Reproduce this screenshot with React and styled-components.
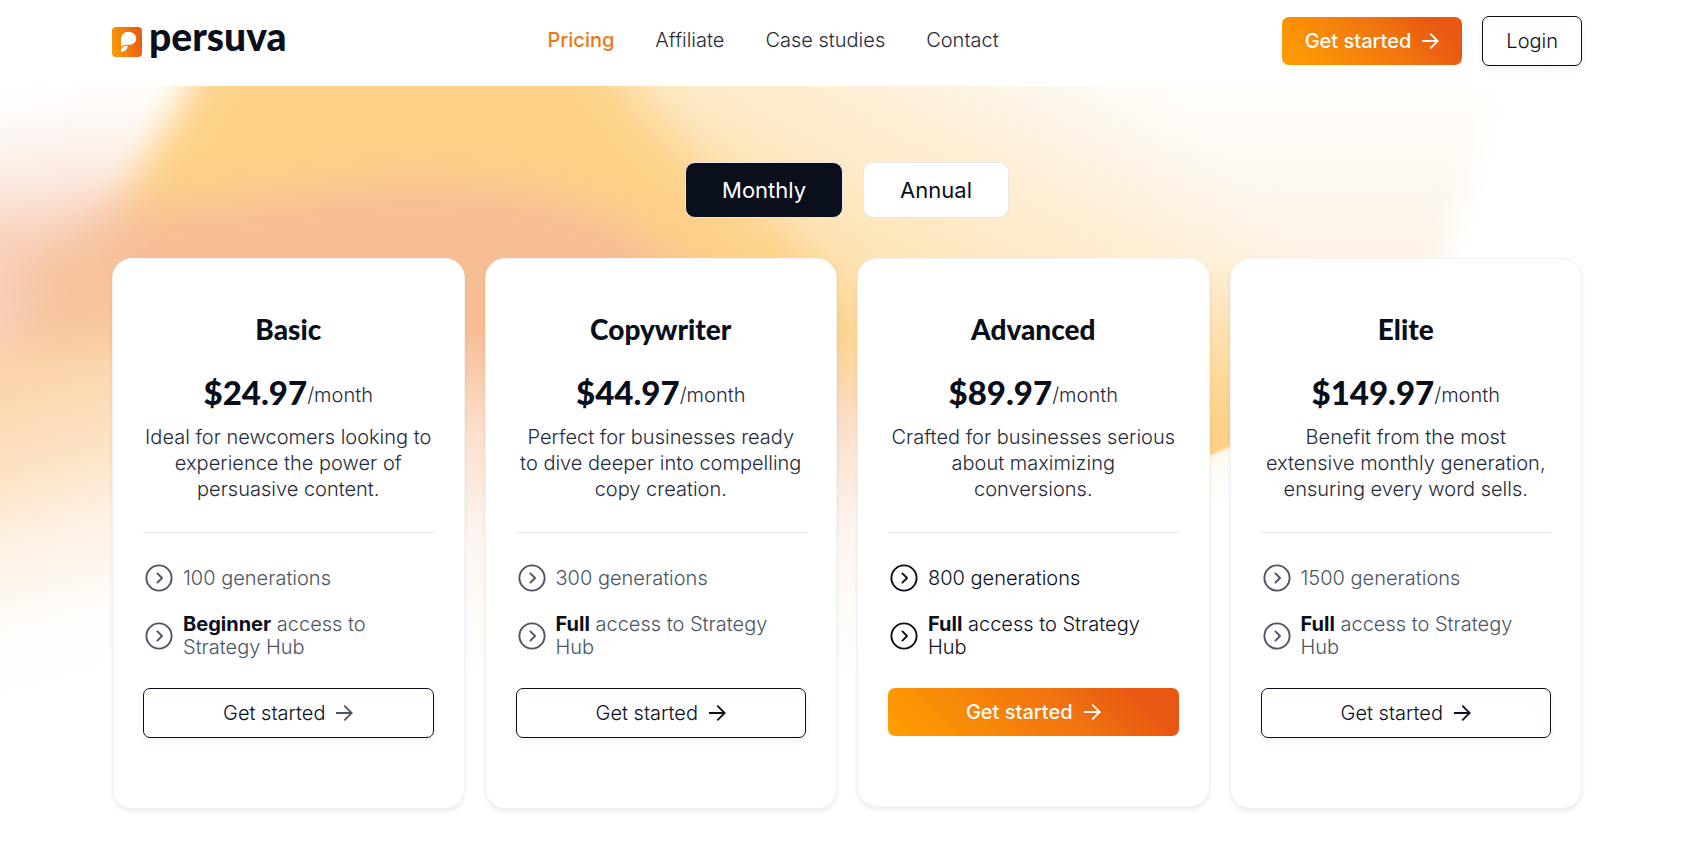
import React, { useState } from "react";
import styled, { createGlobalStyle } from "styled-components";

const plans = [
  {
    name: "Basic",
    price: "$24.97",
    text: "Ideal for newcomers looking to\nexperience the power of\npersuasive content.",
    generations: "100 generations",
    access: "Beginner",
    softArrow: true,
  },
  {
    name: "Copywriter",
    price: "$44.97",
    text: "Perfect for businesses ready\nto dive deeper into compelling\ncopy creation.",
    generations: "300 generations",
    access: "Full",
  },
  {
    name: "Advanced",
    price: "$89.97",
    text: "Crafted for businesses serious\nabout maximizing\nconversions.",
    generations: "800 generations",
    access: "Full",
    featured: true,
  },
  {
    name: "Elite",
    price: "$149.97",
    text: "Benefit from the most\nextensive monthly generation,\nensuring every word sells.",
    generations: "1500 generations",
    access: "Full",
  },
];

const Arrow = () => (
  <svg width="18" height="18" viewBox="0 0 18 18" fill="none" aria-hidden="true">
    <path
      d="M1 9h15.5M9.3 1.6 16.7 9l-7.4 7.4"
      stroke="currentColor"
      strokeWidth="1.8"
    />
  </svg>
);

const CircleChevron = () => (
  <svg width="32" height="32" viewBox="0 0 32 32" fill="none" aria-hidden="true">
    <circle cx="16" cy="16" r="12.6" stroke="currentColor" strokeWidth="1.9" />
    <path
      d="m14.4 11.4 4.6 4.6-4.6 4.6"
      stroke="currentColor"
      strokeWidth="1.9"
      strokeLinecap="round"
      strokeLinejoin="round"
    />
  </svg>
);

const LogoMark = () => (
  <svg width="30" height="30" viewBox="0 0 30 30" aria-hidden="true">
    <defs>
      <linearGradient id="mark" x1="0" y1="0.6" x2="1" y2="0.4">
        <stop offset="0" stopColor="#fb9a06" />
        <stop offset="1" stopColor="#e95a12" />
      </linearGradient>
    </defs>
    <rect width="30" height="30" rx="4" fill="url(#mark)" />
    <path
      d="M9 20V12.500C9 8 12 4.800 16.300 4.800c4.400 0 7.900 3 7.900 6.700 0 4-3.400 6.300-7.500 6.300-3.200 0-5.700.3-7.700 2.200z"
      fill="#fff"
    />
    <path d="M9 24.800c-.4-3.500 1.700-6 6.800-6.100-.3 3.400-2.500 5.900-6.800 6.100z" fill="#fff" />
  </svg>
);

const Backdrop = () => (
  <BackdropSvg viewBox="0 86 1702 760" preserveAspectRatio="none" aria-hidden="true">
    <defs>
      <filter id="soft" x="-20%" y="-20%" width="140%" height="140%">
        <feGaussianBlur stdDeviation="22" />
      </filter>
      <filter id="medium" x="-20%" y="-20%" width="140%" height="140%">
        <feGaussianBlur stdDeviation="14" />
      </filter>
      <filter id="edge" x="-20%" y="-20%" width="140%" height="140%">
        <feGaussianBlur stdDeviation="1" />
      </filter>
      <linearGradient
        id="cream"
        gradientUnits="userSpaceOnUse"
        x1="800"
        y1="300"
        x2="960"
        y2="0"
      >
        <stop offset="0" stopColor="#fee0aa" />
        <stop offset="0.3" stopColor="#fde6bb" />
        <stop offset="0.45" stopColor="#feebcc" />
        <stop offset="0.65" stopColor="#feefd6" />
        <stop offset="0.85" stopColor="#fdf5ea" />
        <stop offset="1" stopColor="#fffdf8" />
      </linearGradient>
      <linearGradient id="rim" x1="0" y1="0" x2="0" y2="1">
        <stop offset="0" stopColor="#fffefb" />
        <stop offset="0.35" stopColor="#fdf7ee" />
        <stop offset="0.75" stopColor="#feeedb" />
        <stop offset="1" stopColor="#feecd2" />
      </linearGradient>
      <linearGradient id="corner" gradientUnits="userSpaceOnUse" x1="0" y1="100" x2="20" y2="250">
        <stop offset="0" stopColor="#fff" />
        <stop offset="0.4" stopColor="#fdf1ea" />
        <stop offset="0.7" stopColor="#fae2d5" />
        <stop offset="1" stopColor="#f8cfb9" stopOpacity="0" />
      </linearGradient>
      <linearGradient id="wedge" x1="0" y1="0" x2="0" y2="1">
        <stop offset="0" stopColor="#fdd188" stopOpacity="0" />
        <stop offset="0.85" stopColor="#fdd085" />
      </linearGradient>
      <linearGradient id="fade" x1="0" y1="0" x2="0" y2="1">
        <stop offset="0" stopColor="#fff" stopOpacity="0" />
        <stop offset="0.28" stopColor="#fff" stopOpacity="0.5" />
        <stop offset="0.6" stopColor="#fff" stopOpacity="0.86" />
        <stop offset="1" stopColor="#fff" />
      </linearGradient>
      <linearGradient id="sideFade" x1="0" y1="0" x2="0.1" y2="1">
        <stop offset="0" stopColor="#fff" stopOpacity="0" />
        <stop offset="0.3" stopColor="#fff" stopOpacity="0.3" />
        <stop offset="0.55" stopColor="#fff" stopOpacity="0.7" />
        <stop offset="0.8" stopColor="#fff" stopOpacity="0.94" />
        <stop offset="1" stopColor="#fff" />
      </linearGradient>
    </defs>
    <path d="M900 86H1500L1440 270 1300 420H900Z" fill="url(#rim)" filter="url(#medium)" />
    <g filter="url(#soft)">
      <path d="M540 20H1180C1180 150 1200 230 1330 290L1230 450 1000 620 700 700Z" fill="url(#cream)" />
      <path d="M210 20H590C620 90 690 160 760 210 830 260 880 330 900 420L700 600 40 500-80 340-80 270C60 250 150 160 210 20Z" fill="#fdd188" />
      <path d="M-80 160C40 160 100 160 130 190L60 420-80 420Z" fill="#f8cfb9" />
      <path d="M60 250C80 200 190 205 290 192 400 170 540 175 630 225 720 290 800 350 870 400L880 760H20Z" fill="#f7be96" />
      <path d="M30 250 130 220V380H20Z" fill="#f7c39b" />
      <path d="M-80 360 150 330V760H-80Z" fill="#fbd3a6" />
    </g>
    <path d="M-100 20H200C170 110 120 200 20 260H-100Z" fill="url(#corner)" filter="url(#soft)" />
    <path d="M1190 260H1250V438L1190 464Z" fill="url(#wedge)" filter="url(#edge)" />
    <path d="M1190 464 1250 438V560H1190Z" fill="#fff" opacity="0.6" filter="url(#edge)" />
    <rect x="120" y="330" width="1070" height="350" fill="url(#fade)" />
    <rect y="360" width="120" height="340" fill="url(#sideFade)" />
    <rect x="1190" y="500" width="512" height="346" fill="#fff" />
    <rect y="679" x="120" width="1582" height="170" fill="#fff" />
    <rect y="699" width="120" height="150" fill="#fff" />
  </BackdropSvg>
);

const App = () => {
  const [billing, setBilling] = useState("Monthly");

  return (
    <>
      <GlobalStyle />
      <Header>
        <Logo href="#">
          <LogoMark />
          <span>persuva</span>
        </Logo>
        <Nav>
          <NavLink href="#pricing" $active>
            Pricing
          </NavLink>
          <NavLink href="#affiliate">Affiliate</NavLink>
          <NavLink href="#case-studies">Case studies</NavLink>
          <NavLink href="#contact">Contact</NavLink>
        </Nav>
        <Actions>
          <Button type="button" $primary>
            Get started <Arrow />
          </Button>
          <Button type="button">Login</Button>
        </Actions>
      </Header>

      <Main id="pricing">
        <Backdrop />
        <Billing>
          {["Monthly", "Annual"].map((period) => (
            <BillingButton
              key={period}
              type="button"
              aria-pressed={billing === period}
              $active={billing === period}
              onClick={() => setBilling(period)}
            >
              {period}
            </BillingButton>
          ))}
        </Billing>

        <Plans>
          {plans.map((plan) => (
            <Card key={plan.name}>
              <h2>{plan.name}</h2>
              <Price>
                <strong>{plan.price}</strong>
                <span>/month</span>
              </Price>
              <Description>{plan.text}</Description>
              <Features $dark={plan.featured}>
                <li>
                  <CircleChevron />
                  <span>{plan.generations}</span>
                </li>
                <li>
                  <CircleChevron />
                  <span>
                    <b>{plan.access}</b> access to Strategy Hub
                  </span>
                </li>
              </Features>
              <Button type="button" $primary={plan.featured} $softArrow={plan.softArrow}>
                Get started <Arrow />
              </Button>
            </Card>
          ))}
        </Plans>
      </Main>
    </>
  );
};

export default App;

const GlobalStyle = createGlobalStyle`
  * {
    box-sizing: border-box;
  }

  body {
    margin: 0;
    background: #fff;
    color: #0a0f1c;
    font-family: Inter, sans-serif;
    font-optical-sizing: none;
    font-size: 20px;
    font-weight: 300;
  }

  svg {
    flex-shrink: 0;
  }
`;

const Header = styled.header`
  display: flex;
  justify-content: space-between;
  align-items: center;
  min-height: 86px;
  padding: 0 120px 4px 112px;
  background: #fff;

  @media all and (max-width: 1300px) {
    flex-wrap: wrap;
    gap: 16px;
    padding: 16px;
  }
`;

const Logo = styled.a`
  display: flex;
  align-items: flex-end;
  gap: 7px;
  padding-bottom: 4px;
  color: #0a0f1c;
  font-family: Lato, sans-serif;
  font-size: 39px;
  font-weight: 900;
  line-height: 30px;
  text-decoration: none;

  span {
    padding-bottom: 6px;
  }
`;

const Nav = styled.nav`
  display: flex;
  gap: 41px;
  padding: 0 22px 2px 0;
`;

const NavLink = styled.a`
  color: ${(props) => (props.$active ? "#ee7612" : "#262b3a")};
  font-weight: ${(props) => (props.$active ? 500 : 300)};
  line-height: 24px;
  text-decoration: none;
`;

const Actions = styled.div`
  display: flex;
  align-items: center;
  gap: 20px;
`;

const Button = styled.button`
  display: flex;
  justify-content: center;
  align-items: center;
  gap: 10px;
  height: ${(props) => (props.$primary ? "48px" : "50px")};
  padding: 0 23px;
  border: ${(props) => (props.$primary ? "none" : "1px solid #0a0f1c")};
  border-radius: 7px;
  background: ${(props) =>
    props.$primary
      ? "linear-gradient(45deg, #ffa000 0%, #f07310 60%, #e95812 85%)"
      : "#fff"};
  box-shadow: ${(props) =>
    props.$primary ? "none" : "0 4px 6px rgba(10, 15, 28, 0.05)"};
  color: ${(props) => (props.$primary ? "#fff" : "#0a0f1c")};
  font-family: inherit;
  font-size: 20px;
  font-weight: ${(props) => (props.$primary ? 500 : 300)};
  cursor: pointer;

  svg {
    color: ${(props) => (props.$softArrow ? "#4b5563" : "inherit")};
  }
`;

const Main = styled.main`
  position: relative;
  padding: 76px 120px 38px 112px;

  @media all and (max-width: 1300px) {
    padding: 40px 16px;
  }
`;

const BackdropSvg = styled.svg`
  position: absolute;
  inset: 0;
  z-index: -1;
  width: 100%;
  height: 100%;
`;

const Billing = styled.div`
  display: flex;
  justify-content: center;
  gap: 20px;
  margin-bottom: 40px;
`;

const BillingButton = styled.button`
  height: 56px;
  padding: 0 36px;
  border: 1px solid #e5e7eb;
  border-radius: 10px;
  background: ${(props) => (props.$active ? "#0a0f1c" : "#fff")};
  color: ${(props) => (props.$active ? "#fff" : "#0a0f1c")};
  font-family: inherit;
  font-size: 22px;
  font-weight: 400;
  cursor: pointer;
`;

const Plans = styled.div`
  display: grid;
  grid-template-columns: repeat(4, 1fr);
  align-items: start;
  gap: 20px;

  @media all and (max-width: 1300px) {
    grid-template-columns: repeat(2, 1fr);
  }

  @media all and (max-width: 700px) {
    grid-template-columns: 1fr;
  }
`;

const Card = styled.article`
  display: flex;
  flex-direction: column;
  padding: 54px 30px 70px;
  border: 1px solid #f1f2f5;
  border-radius: 20px;
  background: #fff;
  box-shadow: 0 3px 4px rgba(10, 15, 28, 0.07);

  h2 {
    margin: 0 0 27px;
    font-family: Lato, sans-serif;
    font-size: 28px;
    font-weight: 900;
    line-height: 32px;
    text-align: center;
  }
`;

const Price = styled.p`
  display: flex;
  justify-content: center;
  align-items: flex-end;
  margin: 0 0 12px;
  color: #262b3a;
  line-height: 34px;

  strong {
    color: #0a0f1c;
    font-family: Lato, sans-serif;
    font-size: 33px;
    font-weight: 900;
    line-height: 40px;
  }
`;

const Description = styled.p`
  margin: 0;
  padding-bottom: 30px;
  border-bottom: 1px solid #e5e7eb;
  color: #262b3a;
  line-height: 26px;
  text-align: center;
  white-space: pre-line;
`;

const Features = styled.ul`
  display: flex;
  flex-direction: column;
  gap: 19px;
  margin: 29px 0;
  padding: 0;
  color: ${(props) => (props.$dark ? "#0a0f1c" : "#4b5563")};
  line-height: 23px;
  list-style: none;

  li {
    display: flex;
    align-items: center;
    gap: 8px;
  }

  b {
    color: #0a0f1c;
    font-weight: 700;
  }
`;
